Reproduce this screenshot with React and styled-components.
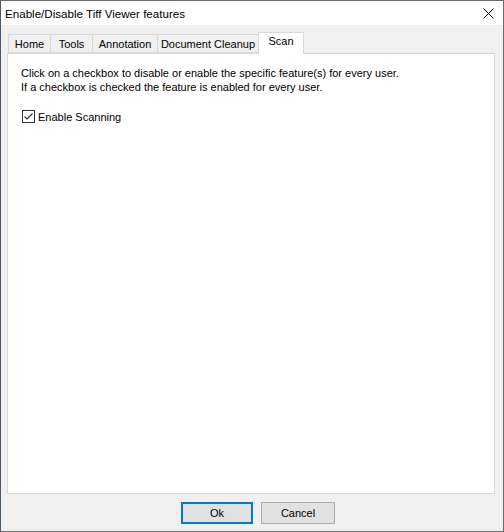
import React from "react";
import styled, { createGlobalStyle } from "styled-components";

const Global = createGlobalStyle`
  html, body { margin: 0; padding: 0; background: #f0f0f0; }
  body { font-family: "Liberation Sans", Arial, sans-serif; font-size: 11px; color: #000; }
`;

const Window = styled.div`
  box-sizing: border-box;
  width: 504px;
  height: 532px;
  display: flex;
  flex-direction: column;
  background: #f0f0f0;
  border: 1px solid #6b6b6b;
  border-left-color: #4a5a6e;
  overflow: hidden;
`;

const TitleBar = styled.div`
  height: 24px;
  flex: none;
  display: flex;
  align-items: center;
  justify-content: space-between;
  background: #fff;
  padding: 0 0 0 4px;
`;

const Title = styled.span`
  font-size: 11.6px;
`;

const CloseBtn = styled.div`
  width: 30px;
  height: 24px;
  display: flex;
  align-items: center;
  justify-content: center;
`;

const Body = styled.div`
  flex: 1;
  display: flex;
  flex-direction: column;
  padding: 7px 8px 0 6px;
  min-height: 0;
`;

const TabRow = styled.div`
  display: flex;
  align-items: flex-end;
  height: 21px;
  padding-left: 1px;
  position: relative;
  z-index: 1;
`;

const Tab = styled.div`
  box-sizing: border-box;
  width: ${(p) => p.$w}px;
  height: ${(p) => (p.$active ? "22px" : "19px")};
  margin-bottom: ${(p) => (p.$active ? "-1px" : "0")};
  padding-top: ${(p) => (p.$active ? "2px" : "0")};
  display: flex;
  justify-content: center;
  align-items: ${(p) => (p.$active ? "flex-start" : "center")};
  background: ${(p) => (p.$active ? "#fff" : "#f0f0f0")};
  border: 1px solid #d9d9d9;
  border-bottom: ${(p) => (p.$active ? "none" : "1px solid #d9d9d9")};
  margin-left: ${(p) => (p.$first ? "0" : "-1px")};
  white-space: nowrap;
`;

const Panel = styled.div`
  flex: none;
  height: 441px;
  box-sizing: border-box;
  background: #fff;
  border: 1px solid #d9d9d9;
  padding: 12px 13px;
`;

const Info = styled.p`
  margin: 0;
  line-height: 14px;
`;

const CheckRow = styled.label`
  display: flex;
  align-items: center;
  gap: 3px;
  margin-top: 16px;
  margin-left: 1px;
`;

const Box = styled.span`
  box-sizing: border-box;
  width: 13px;
  height: 13px;
  border: 1px solid #333;
  background: #fff;
  display: flex;
  align-items: center;
  justify-content: center;
`;

const Footer = styled.div`
  display: flex;
  justify-content: flex-start;
  gap: 8px;
  padding: 8px 0 0 174px;
`;

const Button = styled.button`
  box-sizing: border-box;
  width: ${(p) => p.$w}px;
  height: 22px;
  font: inherit;
  font-size: 11px;
  color: #000;
  background: #e1e1e1;
  border: ${(p) => (p.$default ? "2px solid #0078d7" : "1px solid #adadad")};
  padding: 0;
`;

const tabs = [
  { label: "Home", w: 43 },
  { label: "Tools", w: 43 },
  { label: "Annotation", w: 66 },
  { label: "Document Cleanup", w: 102 },
  { label: "Scan", w: 46, active: true },
];

export default function App() {
  return (
    <>
      <Global />
      <Window>
        <TitleBar>
          <Title>Enable/Disable Tiff Viewer features</Title>
          <CloseBtn>
            <svg width="11" height="11" viewBox="0 0 11 11">
              <path d="M0.5 0.5L10.5 10.5M10.5 0.5L0.5 10.5" stroke="#000" strokeWidth="1" />
            </svg>
          </CloseBtn>
        </TitleBar>
        <Body>
          <TabRow>
            {tabs.map((t, i) => (
              <Tab key={t.label} $w={t.w} $first={i === 0} $active={t.active}>
                {t.label}
              </Tab>
            ))}
          </TabRow>
          <Panel>
            <Info>Click on a checkbox to disable or enable the specific feature(s) for every user.</Info>
            <Info>If a checkbox is checked the feature is enabled for every user.</Info>
            <CheckRow>
              <Box>
                <svg width="11" height="11" viewBox="0 0 11 11">
                  <path d="M1.5 5.5L4 8L9.5 2.5" stroke="#333" strokeWidth="1.2" fill="none" />
                </svg>
              </Box>
              Enable Scanning
            </CheckRow>
          </Panel>
          <Footer>
            <Button $w={72} $default>Ok</Button>
            <Button $w={74}>Cancel</Button>
          </Footer>
        </Body>
      </Window>
    </>
  );
}
